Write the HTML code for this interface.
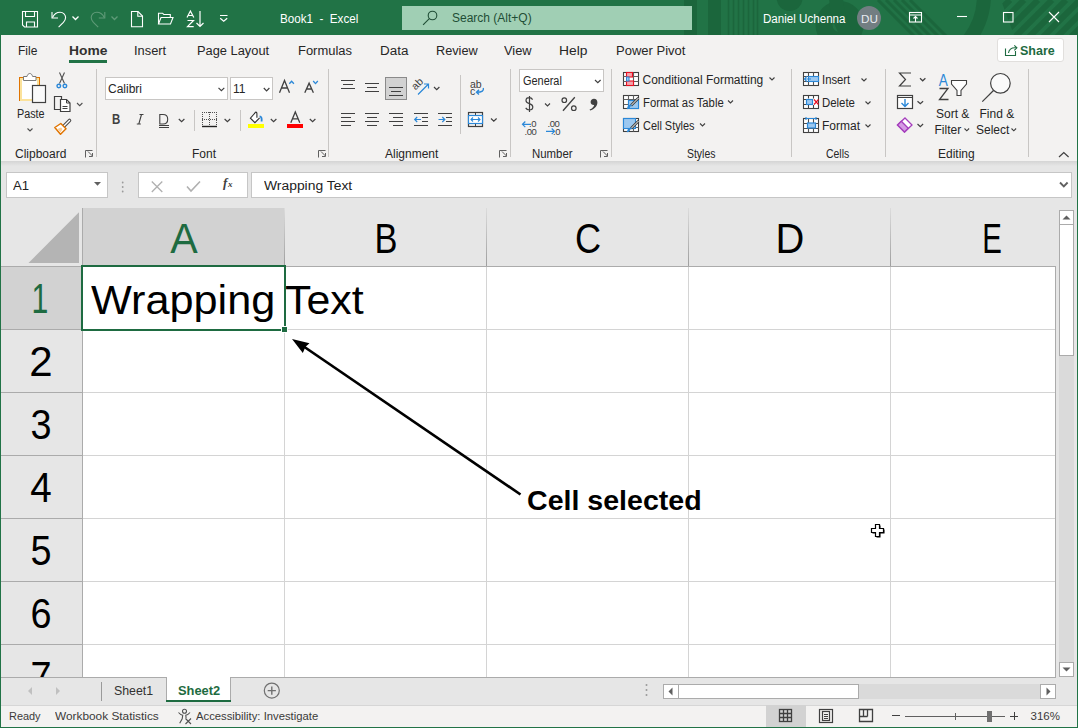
<!DOCTYPE html>
<html><head><meta charset="utf-8">
<style>
*{margin:0;padding:0;box-sizing:border-box}
html,body{width:1078px;height:728px;overflow:hidden}
body{position:relative;background:#e6e6e6;font-family:"Liberation Sans",sans-serif;color:#262626}
.a{position:absolute}
.t{position:absolute;line-height:1;white-space:nowrap;font-size:12px;transform-origin:0 0}
svg{position:absolute;overflow:visible}
.hl{position:absolute;height:1px;background:#d4d4d4}
.vl{position:absolute;width:1px;background:#d4d4d4}
.sep{position:absolute;width:1px;background:#c8c6c4}
</style></head><body>

<!-- TITLE BAR -->
<div class="a" style="left:0;top:0;width:1078px;height:35px;background:#217346;overflow:hidden">
  <svg width="1078" height="35" style="left:0;top:0">
    <g fill="none" stroke="#1b663c">
      <rect x="684" y="0" width="13" height="35" fill="#1b663c" stroke="none"/>
      <rect x="708" y="0" width="13" height="35" fill="#1b663c" stroke="none"/>
      <path d="M728.5 0v35M733.5 0v35M738.5 0v35M743.5 0v35M748.5 0v35M753.5 0v35M757.5 0v35" stroke-width="1.6"/>
      <circle cx="789.6" cy="-2" r="13" fill="#1b663c" stroke="none"/>
      <circle cx="839.5" cy="25" r="15.5" stroke-width="17"/>
      <path d="M878 0l40 40M886 0l40 40M894 0l40 40M902 0l40 40M910 0l40 40" stroke-width="3"/>
      <circle cx="910" cy="-5" r="74" stroke-width="14"/>
      <defs><clipPath id="rs"><polygon points="1001,0 1078,0 1078,35 1014,35"/></clipPath></defs><path clip-path="url(#rs)" d="M1010 0l-40 40M1024 0l-40 40M1038 0l-40 40M1052 0l-40 40M1066 0l-40 40M1080 0l-40 40M1094 0l-40 40M1108 0l-40 40" stroke-width="6"/>
    </g>
  </svg>
</div>
<div class="a" style="left:402px;top:6px;width:290px;height:24px;background:#a0cfb4"></div>
<div class="t" style="left:280px;top:13px;color:#fff;transform:scaleX(0.97)">Book1 &nbsp;- &nbsp;Excel</div>
<div class="t" style="left:452px;top:12px;color:#1f4e36">Search (Alt+Q)</div>
<div class="t" style="left:763px;top:13px;color:#fff;transform:scaleX(0.966)">Daniel Uchenna</div>
<div class="a" style="left:857px;top:6px;width:24px;height:24px;border-radius:50%;background:#727e82"></div>
<div class="t" style="left:861px;top:12.6px;color:#e8ecf0;font-size:11.7px">DU</div>

<!-- TITLE ICONS START -->
<svg width="1078" height="35" style="left:0;top:0">
<g fill="none" stroke="#fff" stroke-width="1.1">
<!-- save -->
<path d="M22.5 11.5h15v15.5h-13l-2-2z"/>
<path d="M25.5 11.5v5h9v-5M26.5 27v-5h8v5"/>
<!-- undo -->
<path d="M52 12v6h6" />
<path d="M52.5 17.5c1.8-3.5 4.5-5.2 7.5-5.2 3.3 0 5.6 2.4 5.6 5.3 0 1.8-.8 3.3-2.2 4.8l-4.8 4.8"/>
<path d="M72.5 16.5l3 3 3-3" stroke-width="1.3"/>
<!-- redo faded -->
<g stroke="#5f9a78">
<path d="M104.8 12v6h-6"/>
<path d="M104.3 17.5c-1.8-3.5-4.5-5.2-7.5-5.2-3.3 0-5.6 2.4-5.6 5.3 0 1.8.8 3.3 2.2 4.8l4.8 4.8"/>
<path d="M111.5 16.5l3 3 3-3" stroke-width="1.3"/>
</g>
<!-- new -->
<path d="M131.5 11.5h6.5l4.5 4.5v10.8h-11z"/>
<path d="M137.8 11.5v4.8h4.7"/>
<!-- open -->
<path d="M158.5 24v-10.8h4l1.3 1.3h6.5v2.5"/>
<path d="M158.5 24l2.5-6.5h12l-2.5 6.5z"/>
<!-- sort -->
<path d="M200 11v15.5M196.5 23l3.5 3.5 3.5-3.5" stroke-width="1.2"/>
<path d="M187.5 20.5h6l-6 6.2h6.2" stroke-width="1.2"/>
<path d="M187 17.6l3.4-6.6 3.4 6.6M188.2 15.5h4.4" stroke-width="1.2"/>
<!-- customize -->
<path d="M220 15.5h7.5M220.2 18.2l3.5 3 3.5-3" stroke-width="1.2"/>
<!-- search icon -->
<circle cx="432.5" cy="15.5" r="4.3" stroke="#1f4e36" stroke-width="1.1"/>
<path d="M429.3 18.7l-6.2 6.2" stroke="#1f4e36" stroke-width="1.1"/>
<!-- ribbon display options -->
<rect x="909.5" y="12.5" width="12" height="9.5"/>
<path d="M909.5 15h12M915.5 22v-5M913.5 18.5l2-2 2 2"/>
<!-- minimize -->
<path d="M957 16.5h10"/>
<!-- maximize -->
<rect x="1003.5" y="12.5" width="9.5" height="9.5"/>
<!-- close -->
<path d="M1049 12l10 10M1059 12l-10 10"/>
</g>
</svg>

<!-- TITLE ICONS END -->
<!-- TAB ROW + RIBBON -->
<div class="a" style="left:1px;top:35px;width:1076px;height:126px;background:#f3f2f1"></div>
<div class="t" style="left:18px;top:45px">File</div>
<div class="t" style="left:69px;top:45px;font-weight:bold;color:#323130;transform:scaleX(1.15)">Home</div>
<div class="a" style="left:69px;top:60px;width:38px;height:3px;background:#217346"></div>
<div class="t" style="left:134px;top:45px;transform:scaleX(1.07)">Insert</div>
<div class="t" style="left:197px;top:45px;transform:scaleX(1.07)">Page Layout</div>
<div class="t" style="left:298px;top:45px;transform:scaleX(1.08)">Formulas</div>
<div class="t" style="left:380px;top:45px;transform:scaleX(1.12)">Data</div>
<div class="t" style="left:436px;top:45px;transform:scaleX(1.06)">Review</div>
<div class="t" style="left:504px;top:45px;transform:scaleX(1.07)">View</div>
<div class="t" style="left:559px;top:45px;transform:scaleX(1.15)">Help</div>
<div class="t" style="left:616px;top:45px;transform:scaleX(1.085)">Power Pivot</div>
<div class="a" style="left:997px;top:38px;width:67px;height:24px;background:#fff;border:1px solid #e1dfdd;border-radius:3px"></div>
<div class="t" style="left:1020px;top:45px;font-weight:bold;color:#1e6b41;font-size:12.5px;transform:scaleX(1.0)">Share</div>
<svg width="20" height="20" style="left:1003px;top:42px"><g fill="none" stroke="#1e6b41" stroke-width="1.1"><path d="M2.5 6.5v7h10v-4.5"/><path d="M5.5 11c.5-3.5 2.8-5.2 6.5-5.2h1.5"/><path d="M11.3 3.3l2.6 2.5-2.6 2.5"/></g></svg>

<!-- ribbon shadow -->
<div class="a" style="left:1px;top:161px;width:1076px;height:5px;background:linear-gradient(#d4d4d4,#e6e6e6)"></div>

<!-- RIBBON ICONS START -->
<svg width="1078" height="728" style="left:0;top:0">
<g fill="none" stroke-linejoin="miter">
<!-- Paste -->
<rect x="19.5" y="77.5" width="20" height="23" fill="#fff" stroke="#e07400"/>
<rect x="21" y="79" width="17" height="21" fill="none" stroke="#fbe29b" stroke-width="2"/>
<path d="M23.5 76.5h3.5c.5-2 1.5-3 2.8-3s2.3 1 2.8 3h3.4v4h-12.5z" fill="#fff" stroke="#7a7a7a"/>
<rect x="32.5" y="85.5" width="13" height="17" fill="#fafafa" stroke="#404040" stroke-width="1.2"/>
<!-- paste chevron -->
<path d="M27.5 128.5l2.5 2.5 2.5-2.5" stroke="#505050" stroke-width="1.1"/>
<!-- Cut -->
<path d="M59.5 72.5l5 11M64.5 72.5l-5 11" stroke="#505050" stroke-width="1.1"/>
<circle cx="58.8" cy="86" r="1.8" stroke="#2b88d8" stroke-width="1.4"/>
<circle cx="64.9" cy="86" r="1.8" stroke="#2b88d8" stroke-width="1.4"/>
<!-- Copy -->
<path d="M60 109.5h-5.5v-13h7v3" stroke="#404040" stroke-width="1.2"/>
<path d="M60.5 99.5h6l3.5 3.5v8.5h-9.5z" fill="#fff" stroke="#404040" stroke-width="1.2"/>
<path d="M66.5 99.5v3.5h3.5M62.5 106.5h5M62.5 108.5h5" stroke="#404040" stroke-width="1"/>
<path d="M77 103l2.7 2.7 2.7-2.7" stroke="#505050" stroke-width="1.1"/>
<!-- Format painter -->
<path d="M63.5 126.5l6-6" stroke="#505050" stroke-width="3.6" stroke-linecap="round"/>
<path d="M63.5 126.5l6-6" stroke="#fff" stroke-width="1.4" stroke-linecap="round"/>
<path d="M54.8 127.5l6-4 5.2 5.2-5.5 5.5z" fill="#fff" stroke="#e07400" stroke-width="1.5" stroke-linejoin="round"/>
<path d="M57.5 129l3.5-1.5 1.5 1.5-2 3.5z" fill="#f9cf9b" stroke="none"/>
<!-- Font name box -->
<rect x="105.5" y="77.5" width="122" height="22" fill="#fff" stroke="#c8c6c4"/>
<path d="M218.5 87.8l2.9 2.9 2.9-2.9" stroke="#404040" stroke-width="1.2"/>
<rect x="230.5" y="77.5" width="42" height="22" fill="#fff" stroke="#c8c6c4"/>
<path d="M263.8 88l2.8 2.8 2.8-2.8" stroke="#404040" stroke-width="1.2"/>
<!-- grow/shrink -->
<path d="M279.5 92.8l5-12.3 5 12.3M281.5 88h6" stroke="#404040" stroke-width="1.3"/>
<path d="M289.3 83.8l2.3-2.6 2.3 2.6" stroke="#2b88d8" stroke-width="1.3"/>
<path d="M304.8 92.8l4.3-9.6 4.3 9.6M306.5 89h5.2" stroke="#404040" stroke-width="1.3"/>
<path d="M313.2 81l2.3 2.6 2.3-2.6" stroke="#2b88d8" stroke-width="1.3"/>
<!-- B I U -->

<path d="M139.5 114.5h4M136.8 124h4M141.5 114.5l-2.7 9.5" stroke="#404040" stroke-width="1.1"/>
<path d="M159.8 114.5h3.2c3 0 4.7 1.8 4.7 4.7s-1.7 4.8-4.7 4.8h-3.2z" stroke="#404040" stroke-width="1.1"/>
<path d="M159 125.5h10M159 127.5h10" stroke="#404040" stroke-width="1"/>
<path d="M178.8 119l2.8 2.6 2.8-2.6" stroke="#404040" stroke-width="1.2"/>
<line x1="194.5" y1="110" x2="194.5" y2="131" stroke="#c8c6c4"/>
<!-- borders -->
<g fill="#505050" stroke="none"><rect x="202" y="112" width="1" height="1"/><rect x="202" y="119" width="1" height="1"/><rect x="204" y="112" width="1" height="1"/><rect x="204" y="119" width="1" height="1"/><rect x="206" y="112" width="1" height="1"/><rect x="206" y="119" width="1" height="1"/><rect x="208" y="112" width="1" height="1"/><rect x="208" y="119" width="1" height="1"/><rect x="210" y="112" width="1" height="1"/><rect x="210" y="119" width="1" height="1"/><rect x="212" y="112" width="1" height="1"/><rect x="212" y="119" width="1" height="1"/><rect x="214" y="112" width="1" height="1"/><rect x="214" y="119" width="1" height="1"/><rect x="216" y="112" width="1" height="1"/><rect x="216" y="119" width="1" height="1"/><rect x="202" y="112" width="1" height="1"/><rect x="209" y="112" width="1" height="1"/><rect x="216" y="112" width="1" height="1"/><rect x="202" y="114" width="1" height="1"/><rect x="209" y="114" width="1" height="1"/><rect x="216" y="114" width="1" height="1"/><rect x="202" y="116" width="1" height="1"/><rect x="209" y="116" width="1" height="1"/><rect x="216" y="116" width="1" height="1"/><rect x="202" y="118" width="1" height="1"/><rect x="209" y="118" width="1" height="1"/><rect x="216" y="118" width="1" height="1"/><rect x="202" y="120" width="1" height="1"/><rect x="209" y="120" width="1" height="1"/><rect x="216" y="120" width="1" height="1"/><rect x="202" y="122" width="1" height="1"/><rect x="209" y="122" width="1" height="1"/><rect x="216" y="122" width="1" height="1"/><rect x="202" y="124" width="1" height="1"/><rect x="209" y="124" width="1" height="1"/><rect x="216" y="124" width="1" height="1"/></g>
<path d="M202 126.5h15" stroke="#202020" stroke-width="1.4"/>
<path d="M224.6 119l2.8 2.6 2.8-2.6" stroke="#404040" stroke-width="1.2"/>
<line x1="240.5" y1="110" x2="240.5" y2="131" stroke="#c8c6c4"/>
<!-- fill color -->
<path d="M256.9 117.8v-4.2c0-.9-.4-1.5-1-1.5s-1 .5-1.2 1.2l-4.3 4.9 4.5 4.5 4.7-4.9" fill="#fff" stroke="#303030" stroke-width="1.1"/>
<path d="M259.6 116.3c1.6.1 2.4 1.6 2 5.2" stroke="#2b88d8" stroke-width="1.8"/>
<rect x="248" y="124" width="16" height="4" fill="#ffff00" stroke="none"/>
<path d="M270.8 119l2.8 2.6 2.8-2.6" stroke="#404040" stroke-width="1.2"/>
<!-- font color -->
<path d="M290.8 122.7l4.5-10.7 4.5 10.7M292.5 118.8h5.6" stroke="#404040" stroke-width="1.3"/>
<rect x="287" y="124" width="16" height="4" fill="#ff0000" stroke="none"/>
<path d="M309.8 119l2.8 2.6 2.8-2.6" stroke="#404040" stroke-width="1.2"/>
<!-- launchers -->
<path d="M85.5 157.5v-7h7M88 151.5l4.5 4.5M92.5 153v3.5H89" stroke="#606060" stroke-width="1"/>
<path d="M318.5 157.5v-7h7M321 151.5l4.5 4.5M325.5 153v3.5H322" stroke="#606060" stroke-width="1"/>
<path d="M499.5 157.5v-7h7M502 151.5l4.5 4.5M506.5 153v3.5H503" stroke="#606060" stroke-width="1"/>
<path d="M600.5 157.5v-7h7M603 151.5l4.5 4.5M607.5 153v3.5H604" stroke="#606060" stroke-width="1"/>
<!-- collapse ribbon -->
<path d="M1059 157l4.8-4.5 4.8 4.5" stroke="#404040" stroke-width="1.2"/>
</g>
</svg>
<div class="t" style="left:16.5px;top:107.5px;transform:scaleX(0.9)">Paste</div>
<div class="t" style="left:112.3px;top:112.3px;font-size:14px;font-weight:bold;color:#404040;transform:scaleX(0.82)">B</div>
<div class="t" style="left:108px;top:82.8px;color:#262626">Calibri</div>
<div class="t" style="left:233px;top:82.8px;color:#262626">11</div>

<svg width="1078" height="728" style="left:0;top:0">
<g fill="none" stroke="#404040" stroke-width="1">
<!-- Alignment row1 -->
<path d="M341 80.5h14M343 84.5h10M341 88.5h14"/>
<path d="M365 83.5h14M367 87.5h10M365 91.5h14"/>
<rect x="385.5" y="77.5" width="21" height="22" fill="#d2d2d2" stroke="#8a8a8a"/>
<path d="M389 87.5h14M391 91.5h10M389 95.5h14"/>
<text x="0" y="0" transform="translate(415.5,90.5) rotate(-45)" font-family="Liberation Sans" font-size="10.5" fill="#404040" stroke="none">ab</text>
<path d="M418 94.5l10.5-10.5M424 84h4.5v4.5" stroke="#2b88d8" stroke-width="1.2"/>
<path d="M434 87l2.7 2.7 2.7-2.7" stroke-width="1.2"/>
<!-- row2 -->
<path d="M341 113.5h14M341 117.5h10M341 121.5h14M341 125.5h10"/>
<path d="M365 113.5h14M367 117.5h10M365 121.5h14M367 125.5h10"/>
<path d="M389 113.5h14M393 117.5h10M389 121.5h14M393 125.5h10"/>
<path d="M414 113.5h14M422 117.5h6M422 121.5h6M414 125.5h14"/>
<path d="M421 119.5h-6.5M417.2 117l-2.5 2.5 2.5 2.5" stroke="#2b88d8" stroke-width="1.2"/>
<path d="M438 113.5h14M446 117.5h6M446 121.5h6M438 125.5h14"/>
<path d="M438.5 119.5h6.5M442.3 117l2.5 2.5-2.5 2.5" stroke="#2b88d8" stroke-width="1.2"/>
<line x1="460.5" y1="75" x2="460.5" y2="134" stroke="#c8c6c4"/>
<!-- wrap text -->
<text x="470" y="87.7" font-family="Liberation Sans" font-size="10.5" fill="#404040" stroke="none">ab</text>
<text x="470" y="95" font-family="Liberation Sans" font-size="10.5" fill="#404040" stroke="none">c</text>
<path d="M483.3 88c.6 2.8-1 4.2-6.5 4.2M479 89.8l-2.5 2.4 2.5 2.4" stroke="#2b88d8" stroke-width="1.4"/>
<!-- merge -->
<rect x="468.5" y="112.5" width="14" height="14" stroke-width="1.2"/>
<path d="M475.5 112.5v2.5M475.5 124v2.5"/>
<rect x="468.5" y="115.5" width="14" height="8" fill="#fff" stroke="#2b88d8" stroke-width="1.2"/>
<path d="M471 119.5h9M473 117.5l-2 2 2 2M478 117.5l2 2-2 2" stroke="#2b88d8" stroke-width="1.1"/>
<path d="M491 118.5l2.8 2.6 2.8-2.6" stroke-width="1.2"/>
<!-- number format -->
<rect x="519.5" y="69.5" width="84" height="22" fill="#fff" stroke="#c8c6c4"/>
<path d="M595 80l2.8 2.6 2.8-2.6" stroke-width="1.2"/>
<path d="M545 103.5l2.5 2.5 2.5-2.5" stroke-width="1.1"/>
<!-- inc/dec decimal -->
<path d="M531 124.3h-8.5M525.3 121.5l-2.8 2.8 2.8 2.8" stroke="#2b88d8" stroke-width="1.2"/>
<path d="M546 131.3h8.5M551.7 128.5l2.8 2.8-2.8 2.8" stroke="#2b88d8" stroke-width="1.2"/>
<!-- Styles icons -->
<g stroke="#404040" stroke-width="1.1">
<rect x="623.5" y="72.5" width="15" height="13" fill="#fff"/>
<path d="M623.5 76.5h15M623.5 81.5h15M628.5 72.5v13M633.5 72.5v13" stroke="#606060"/>
<rect x="623.5" y="95.5" width="15" height="13" fill="#fff"/>
<path d="M623.5 99.5h15M623.5 104.5h15M628.5 95.5v13M633.5 95.5v13" stroke="#606060"/>
<rect x="623.5" y="118.5" width="15" height="13" fill="#fff"/>
<path d="M623.5 122.5h15M623.5 127.5h15M628.5 118.5v13M633.5 118.5v13" stroke="#606060"/>
</g>
<rect x="626.5" y="72.5" width="6" height="4.5" fill="#f4a3ac" stroke="#e81123" stroke-width="1.1"/>
<rect x="626.5" y="81" width="7" height="4.5" fill="#f4a3ac" stroke="#e81123" stroke-width="1.1"/>
<rect x="626.5" y="77" width="2.5" height="4" fill="#9cc8f0" stroke="#2b88d8" stroke-width="1"/>
<rect x="628.5" y="100.5" width="10" height="8" fill="#9cc8f0" stroke="#2b88d8" stroke-width="1.1"/>
<path d="M638.5 98l-7.5 7.5" stroke="#404040" stroke-width="2.6"/>
<path d="M638.5 98l-7.5 7.5" stroke="#fff" stroke-width="1"/>
<path d="M631.5 105l-1.5 1.5c-.5 1.5-1.5 2.2-3 2.2 1-.8 1-2 1.5-3z" fill="#2b88d8" stroke="#2b88d8" stroke-width="1"/>
<rect x="623.5" y="118.5" width="12" height="10" fill="#9cc8f0" stroke="#2b88d8" stroke-width="1.1"/>
<path d="M638.5 121l-7.5 7.5" stroke="#404040" stroke-width="2.6"/>
<path d="M638.5 121l-7.5 7.5" stroke="#fff" stroke-width="1"/>
<path d="M631.5 128l-1.5 1.5c-.5 1.5-1.5 2.2-3 2.2 1-.8 1-2 1.5-3z" fill="#2b88d8" stroke="#2b88d8" stroke-width="1"/>
<path d="M769.5 77.5l2.5 2.5 2.5-2.5M728 100.5l2.5 2.5 2.5-2.5M700 123.5l2.5 2.5 2.5-2.5" stroke-width="1.1"/>
<!-- Cells icons -->
<g stroke="#404040" stroke-width="1.1">
<rect x="803.5" y="72.5" width="15" height="13" fill="#fff"/>
<path d="M803.5 76.5h15M803.5 81.5h15M808.5 72.5v13M813.5 72.5v13" stroke="#505050"/>
<rect x="803.5" y="95.5" width="15" height="13" fill="#fff"/>
<path d="M803.5 95.5h15M803.5 108.5h15M803.5 99.5h3M803.5 104.5h3M808.5 95.5v3M813.5 95.5v3M808.5 105v3.5M813.5 105v3.5"/>
<rect x="803.5" y="118.5" width="15" height="14" fill="#fff"/>
<path d="M803.5 123.5h15M803.5 128.5h15M808.5 118.5v14M813.5 118.5v14" stroke="#505050"/>
</g>
<rect x="808.5" y="76.5" width="10" height="5" fill="#9cc8f0" stroke="#2b88d8" stroke-width="1.1"/>
<path d="M811 79h-6.5M807.2 76.2l-2.8 2.8 2.8 2.8" stroke="#2b88d8" stroke-width="1.1"/>
<rect x="806.5" y="99.5" width="6" height="5" fill="#9cc8f0" stroke="#2b88d8" stroke-width="1.2"/>
<path d="M814 99.5l4.5 5M818.5 99.5l-4.5 5" stroke="#e81123" stroke-width="1.2"/>
<rect x="807.5" y="123" width="8" height="5" fill="#9cc8f0" stroke="#2b88d8" stroke-width="1.2"/>
<path d="M806 118.5h10M806 117v3M816 117v3" stroke="#2b88d8" stroke-width="1.1"/>
<path d="M861.5 78.5l2.5 2.5 2.5-2.5M865.5 101.5l2.5 2.5 2.5-2.5M865.5 124.5l2.5 2.5 2.5-2.5" stroke-width="1.1"/>
<!-- Editing -->
<path d="M911 73h-11.5l6 6.5-6 6.5H911" stroke-width="1.2"/>
<path d="M920 78.2l2.7 2.6 2.7-2.6" stroke-width="1.2"/>
<rect x="897.5" y="95.5" width="15" height="13" fill="#fff" stroke-width="1.2"/>
<path d="M897.5 97.5h15"/>
<path d="M905 99v7.5M901.5 103l3.5 3.5 3.5-3.5" stroke="#2b88d8" stroke-width="1.4"/>
<path d="M917.5 101.2l2.8 2.6 2.8-2.6" stroke-width="1.2"/>
<path d="M905 118l7 7-7.5 7-7-7z" fill="#fff" stroke="#a53ebd" stroke-width="1.3"/>
<path d="M897.5 125l3.8-3.8 7 7-3.8 3.8z" fill="#d59be4" stroke="#a53ebd" stroke-width="1.3"/>
<path d="M917.5 124l2.8 2.6 2.8-2.6" stroke-width="1.2"/>
<!-- sort filter -->
<text x="938.6" y="85.8" font-family="Liberation Sans" font-size="16" fill="#2b88d8" stroke="none" transform="translate(939,0) scale(0.85,1) translate(-939,0)">A</text>
<path d="M939.5 88.5h8.5l-8.5 11h9" stroke-width="1.3"/>
<path d="M951.5 80.5h15v3.5l-5.5 6.5v5h-4v-5l-5.5-6.5z" fill="#fff" stroke-width="1.1"/>
<!-- find -->
<circle cx="1000.4" cy="83.3" r="9.8" fill="#fafafa" stroke-width="1.2"/>
<path d="M993.5 90.5l-11.2 11.2" stroke-width="1.2"/>
<path d="M964.5 128.5l2.3 2.3 2.3-2.3M1011.5 128.5l2.3 2.3 2.3-2.3" stroke-width="1.1"/>
</g>
</svg>
<div class="t" style="left:522.5px;top:74.8px;color:#262626;transform:scaleX(0.91)">General</div>
<svg width="1078" height="728" style="left:0;top:0"><g fill="none" stroke="#404040" stroke-width="1.2">
<path d="M532.6 99.6c-.7-1.3-1.9-2-3.3-2-1.9 0-3.3 1.1-3.3 2.8 0 1.7 1.2 2.5 3.4 3.2 2.3.7 3.4 1.6 3.4 3.4 0 1.9-1.5 3-3.5 3-1.6 0-2.9-.8-3.6-2.1M529.5 96v16"/>
<circle cx="564.3" cy="100.2" r="2.3"/><circle cx="573.8" cy="108.2" r="2.3"/><path d="M574.8 97.3l-11.8 13.5" stroke-width="1.3"/>
<path d="M594 98.7c2.2 0 3.4 1.6 3.4 3.8 0 3.5-2.8 6.8-7.3 7.9l-.5-.9c2.7-1 4.3-2.8 4.6-4.6-2 .2-3.6-1.1-3.6-3 0-1.9 1.4-3.2 3.4-3.2z" fill="#404040" stroke="none"/>
</g></svg>
<div class="t" style="left:529px;top:118.8px;font-size:9.5px;color:#404040;letter-spacing:-0.4px">.0</div>
<div class="t" style="left:524.5px;top:126.8px;font-size:9.5px;color:#404040;letter-spacing:-0.4px">.00</div>
<div class="t" style="left:547.5px;top:118.8px;font-size:9.5px;color:#404040;letter-spacing:-0.4px">.00</div>
<div class="t" style="left:553px;top:126.8px;font-size:9.5px;color:#404040;letter-spacing:-0.4px">.0</div>
<div class="t" style="left:642.5px;top:73.8px;transform:scaleX(1.0)">Conditional Formatting</div>
<div class="t" style="left:642.5px;top:96.8px;transform:scaleX(0.94)">Format as Table</div>
<div class="t" style="left:642.5px;top:119.8px;transform:scaleX(0.91)">Cell Styles</div>
<div class="t" style="left:822px;top:73.8px;transform:scaleX(0.94)">Insert</div>
<div class="t" style="left:822px;top:96.8px;transform:scaleX(0.95)">Delete</div>
<div class="t" style="left:822px;top:119.8px">Format</div>
<div class="t" style="left:936px;top:107.5px">Sort &amp;</div>
<div class="t" style="left:934.5px;top:123.8px">Filter</div>
<div class="t" style="left:979.5px;top:107.5px">Find &amp;</div>
<div class="t" style="left:976px;top:123.8px">Select</div>

<!-- RIBBON ICONS END -->
<!-- group labels -->
<div class="t" style="left:15px;top:148px">Clipboard</div>
<div class="t" style="left:192px;top:148px">Font</div>
<div class="t" style="left:385px;top:148px">Alignment</div>
<div class="t" style="left:532px;top:148px;transform:scaleX(0.95)">Number</div>
<div class="t" style="left:687px;top:148px;transform:scaleX(0.87)">Styles</div>
<div class="t" style="left:826px;top:148px;transform:scaleX(0.87)">Cells</div>
<div class="t" style="left:938px;top:148px">Editing</div>
<div class="sep" style="left:96px;top:69px;height:88px"></div>
<div class="sep" style="left:328px;top:69px;height:88px"></div>
<div class="sep" style="left:510px;top:69px;height:88px"></div>
<div class="sep" style="left:611px;top:69px;height:88px"></div>
<div class="sep" style="left:791px;top:69px;height:88px"></div>
<div class="sep" style="left:885px;top:69px;height:88px"></div>
<div class="sep" style="left:1028px;top:69px;height:88px"></div>

<!-- FORMULA BAR -->
<div class="a" style="left:6px;top:172px;width:102px;height:26px;background:#fff;border:1px solid #c6c6c6"></div>
<div class="t" style="left:13px;top:179.5px;font-size:12.5px;color:#222;transform:scaleX(1.05)">A1</div>
<div class="a" style="left:138px;top:172px;width:110px;height:26px;background:#fff;border:1px solid #c6c6c6"></div>
<div class="a" style="left:251px;top:172px;width:821px;height:26px;background:#fff;border:1px solid #c6c6c6"></div>
<div class="t" style="left:263.5px;top:180.3px;font-size:12.5px;color:#222;transform:scaleX(1.11)">Wrapping Text</div>

<!-- FBAR ICONS START -->
<svg width="1078" height="40" style="left:0;top:165px">
<g fill="none">
<polygon points="94,17 101,17 97.5,20.8" fill="#606060"/>
<circle cx="122.7" cy="17.5" r="0.9" fill="#9a9a9a"/>
<circle cx="122.7" cy="22" r="0.9" fill="#9a9a9a"/>
<circle cx="122.7" cy="26.5" r="0.9" fill="#9a9a9a"/>
<path d="M151.8 16.5l10.5 10.5M162.3 16.5l-10.5 10.5" stroke="#b0b0b0" stroke-width="1.3"/>
<path d="M187 21.5l4 4.5 9-9.5" stroke="#b0b0b0" stroke-width="1.6"/>
<path d="M1060 17.5l3.8 3.8 3.8-3.8" stroke="#606060" stroke-width="1.9"/>
</g>
</svg>
<div class="t" style="left:223px;top:176px;font-family:'Liberation Serif',serif;font-style:italic;font-weight:bold;font-size:13px;color:#404040">f</div>
<div class="t" style="left:228px;top:180px;font-family:'Liberation Serif',serif;font-style:italic;font-weight:bold;font-size:9px;color:#404040">x</div>

<!-- FBAR ICONS END -->
<!-- GRID -->
<div class="a" style="left:82px;top:266px;width:974px;height:411px;background:#fff"></div>
<div class="a" style="left:83px;top:208px;width:201px;height:58px;background:#d2d2d2"></div>
<div class="a" style="left:82px;top:208px;width:1px;height:58px;background:#ababab"></div>
<div class="a" style="left:284px;top:208px;width:1px;height:58px;background:linear-gradient(#dcdcdc,#9e9e9e)"></div>
<div class="a" style="left:486px;top:208px;width:1px;height:58px;background:linear-gradient(#dcdcdc,#9e9e9e)"></div>
<div class="a" style="left:688px;top:208px;width:1px;height:58px;background:linear-gradient(#dcdcdc,#9e9e9e)"></div>
<div class="a" style="left:890px;top:208px;width:1px;height:58px;background:linear-gradient(#dcdcdc,#9e9e9e)"></div>
<div class="a" style="left:0;top:266px;width:1056px;height:1px;background:#ababab"></div>
<svg width="90" height="60" style="left:0;top:208px"><polygon points="28.5,55 79,4.3 79,55" fill="#b4b4b4"/></svg>
<div class="a" style="left:1px;top:267px;width:81px;height:62px;background:#d2d2d2"></div>
<div class="a" style="left:82px;top:266px;width:1px;height:411px;background:#ababab"></div>
<div class="a" style="left:1px;top:329px;width:81px;height:1px;background:#ababab"></div>
<div class="hl" style="left:83px;top:329px;width:973px"></div>
<div class="a" style="left:1px;top:392px;width:81px;height:1px;background:#ababab"></div>
<div class="hl" style="left:83px;top:392px;width:973px"></div>
<div class="a" style="left:1px;top:455px;width:81px;height:1px;background:#ababab"></div>
<div class="hl" style="left:83px;top:455px;width:973px"></div>
<div class="a" style="left:1px;top:518px;width:81px;height:1px;background:#ababab"></div>
<div class="hl" style="left:83px;top:518px;width:973px"></div>
<div class="a" style="left:1px;top:581px;width:81px;height:1px;background:#ababab"></div>
<div class="hl" style="left:83px;top:581px;width:973px"></div>
<div class="a" style="left:1px;top:644px;width:81px;height:1px;background:#ababab"></div>
<div class="hl" style="left:83px;top:644px;width:973px"></div>
<div class="vl" style="left:284px;top:267px;height:410px"></div>
<div class="vl" style="left:486px;top:267px;height:410px"></div>
<div class="vl" style="left:688px;top:267px;height:410px"></div>
<div class="vl" style="left:890px;top:267px;height:410px"></div>
<div class="a" style="left:1055px;top:266px;width:1px;height:411px;background:#ababab"></div>
<div class="a" style="left:1px;top:677px;width:1055px;height:1px;background:#ababab"></div>
<div class="t" style="left:133.5px;width:100px;text-align:center;top:218.4px;font-size:42px;color:#1e6b41;transform:scaleX(0.98);transform-origin:50% 0">A</div>
<div class="t" style="left:335.5px;width:100px;text-align:center;top:218.4px;font-size:42px;color:#000;transform:scaleX(0.82);transform-origin:50% 0">B</div>
<div class="t" style="left:537.5px;width:100px;text-align:center;top:218.4px;font-size:42px;color:#000;transform:scaleX(0.86);transform-origin:50% 0">C</div>
<div class="t" style="left:739.5px;width:100px;text-align:center;top:218.4px;font-size:42px;color:#000;transform:scaleX(0.95);transform-origin:50% 0">D</div>
<div class="t" style="left:941.5px;width:100px;text-align:center;top:218.4px;font-size:42px;color:#000;transform:scaleX(0.7);transform-origin:50% 0">E</div>
<div class="t" style="left:-10px;width:100px;text-align:center;top:278.4px;font-size:42px;color:#1e6b41;transform:scaleX(0.72);transform-origin:50% 0">1</div>
<div class="t" style="left:-9px;width:100px;text-align:center;top:341.4px;font-size:42px;color:#000;transform:scaleX(1.0);transform-origin:50% 0">2</div>
<div class="t" style="left:-9px;width:100px;text-align:center;top:404.4px;font-size:42px;color:#000;transform:scaleX(0.9);transform-origin:50% 0">3</div>
<div class="t" style="left:-9px;width:100px;text-align:center;top:467.4px;font-size:42px;color:#000;transform:scaleX(0.92);transform-origin:50% 0">4</div>
<div class="t" style="left:-9px;width:100px;text-align:center;top:530.4px;font-size:42px;color:#000;transform:scaleX(0.9);transform-origin:50% 0">5</div>
<div class="t" style="left:-9px;width:100px;text-align:center;top:593.4px;font-size:42px;color:#000;transform:scaleX(0.9);transform-origin:50% 0">6</div>
<div class="t" style="left:-9px;width:100px;text-align:center;top:656.4px;font-size:42px;color:#000;transform:scaleX(0.9);transform-origin:50% 0">7</div>
<div class="t" style="left:90.5px;top:280.1px;font-size:40px;color:#000;transform:scaleX(1.081)">Wrapping</div>
<div class="t" style="left:285px;top:280.1px;font-size:40px;color:#000;transform:scaleX(1.071)">Text</div>
<div class="a" style="left:81px;top:265px;width:205px;height:66px;border:2px solid #1e6b41"></div>
<div class="a" style="left:281px;top:326px;width:7px;height:7px;background:#fff"></div>
<div class="a" style="left:282px;top:327px;width:5px;height:5px;background:#1e6b41"></div>
<div class="a" style="left:1059px;top:210px;width:15px;height:466px;background:#dadada"></div>
<div class="a" style="left:1059px;top:210px;width:15px;height:15px;background:#fff;border:1px solid #ababab"></div>
<svg width="15" height="15" style="left:1059px;top:210px"><polygon points="3.5,9.5 7.5,5.5 11.5,9.5" fill="#5f5f5f"/></svg>
<div class="a" style="left:1059px;top:224px;width:15px;height:132px;background:#fff;border:1px solid #ababab"></div>
<div class="a" style="left:1059px;top:662px;width:15px;height:15px;background:#fff;border:1px solid #ababab"></div>
<svg width="15" height="15" style="left:1059px;top:662px"><polygon points="3.5,5.5 7.5,9.5 11.5,5.5" fill="#5f5f5f"/></svg>

<!-- SHEET TABS -->
<div class="a" style="left:1px;top:678px;width:1076px;height:27px;background:#e6e6e6"></div>
<div class="a" style="left:1px;top:677px;width:1055px;height:1px;background:#ababab"></div>
<svg width="20" height="20" style="left:22px;top:681px"><polygon points="10,6 6,10 10,14" fill="#c0c0c0"/></svg>
<svg width="20" height="20" style="left:49px;top:681px"><polygon points="7,6 11,10 7,14" fill="#c0c0c0"/></svg>
<div class="a" style="left:101px;top:682px;width:1px;height:19px;background:#9a9a9a"></div>
<div class="t" style="left:114px;top:685px;color:#323130;transform:scaleX(1.03)">Sheet1</div>
<div class="a" style="left:166px;top:677px;width:65px;height:25px;background:#fff;border-left:1px solid #ababab;border-right:1px solid #ababab"></div>
<div class="a" style="left:166px;top:700px;width:65px;height:2px;background:#1e6b41"></div>
<div class="t" style="left:178px;top:685px;font-weight:bold;color:#1e6b41;transform:scaleX(1.07)">Sheet2</div>
<svg width="20" height="20" style="left:262px;top:681px"><circle cx="9.8" cy="9.6" r="7.5" fill="none" stroke="#707070" stroke-width="1.2"/><path d="M9.8 5.5v8.2M5.7 9.6h8.2" stroke="#707070" stroke-width="1.4"/></svg>
<svg width="6" height="20" style="left:644px;top:681px"><circle cx="2.5" cy="4" r="1" fill="#9a9a9a"/><circle cx="2.5" cy="9" r="1" fill="#9a9a9a"/><circle cx="2.5" cy="14" r="1" fill="#9a9a9a"/></svg>
<div class="a" style="left:663px;top:684px;width:393px;height:15px;background:#dadada"></div>
<div class="a" style="left:663px;top:684px;width:16px;height:15px;background:#fff;border:1px solid #ababab"></div>
<svg width="16" height="15" style="left:663px;top:684px"><polygon points="9.5,3.5 5.5,7.5 9.5,11.5" fill="#5f5f5f"/></svg>
<div class="a" style="left:678px;top:684px;width:181px;height:15px;background:#fff;border:1px solid #ababab"></div>
<div class="a" style="left:1040px;top:684px;width:16px;height:15px;background:#fff;border:1px solid #ababab"></div>
<svg width="16" height="15" style="left:1040px;top:684px"><polygon points="6.5,3.5 10.5,7.5 6.5,11.5" fill="#5f5f5f"/></svg>
<svg width="1078" height="728" style="left:0;top:0"><line x1="520.5" y1="494.5" x2="303" y2="346" stroke="#000" stroke-width="2.7"/><polygon points="292,338.9 309.5,343.3 305.5,346.8 302.8,353.1" fill="#000"/></svg>
<div class="t" style="left:527px;top:487.3px;font-size:28px;font-weight:bold;color:#000;transform:scaleX(1.02)">Cell selected</div>
<svg width="20" height="20" style="left:867px;top:521px"><path d="M8.5 3.5h4v4h4v4h-4v4h-4v-4h-4v-4h4z" fill="#000" transform="translate(1,1)"/><path d="M8.5 3.5h4v4h4v4h-4v4h-4v-4h-4v-4h4z" fill="#fff" stroke="#000" stroke-width="1.2"/></svg>
<!-- STATUS BAR -->
<div class="a" style="left:1px;top:705px;width:1076px;height:22px;background:#f3f2f1;border-top:1px solid #d6d6d6"></div>
<div class="t" style="left:9px;top:711.3px;font-size:11.5px;color:#3b3a39;transform:scaleX(0.95)">Ready</div>
<div class="t" style="left:55px;top:711.3px;font-size:11.5px;color:#3b3a39;transform:scaleX(1.03)">Workbook Statistics</div>
<svg width="18" height="18" style="left:177px;top:708px"><g fill="none" stroke="#505050" stroke-width="1.1"><circle cx="7.5" cy="3.2" r="2"/><path d="M1.5 4.5c1.5 1.8 3 2.6 4.2 2.8l-.5 3.5-2.5 4.5M13 4.5c-1.5 1.8-3 2.6-4.2 2.8l.3 3"/><path d="M8.5 10.5l5.5 5.5M14 10.5l-5.5 5.5"/></g></svg>
<div class="t" style="left:196px;top:711.3px;font-size:11.5px;color:#3b3a39;transform:scaleX(0.98)">Accessibility: Investigate</div>
<div class="a" style="left:766px;top:705px;width:40px;height:22px;background:#d2d2d2"></div>
<svg width="16" height="16" style="left:778px;top:708px"><g fill="none" stroke="#404040" stroke-width="1.3"><rect x="1.5" y="1.5" width="12" height="12"/><path d="M5.5 1.5v12M9.5 1.5v12M1.5 5.5h12M1.5 9.5h12"/></g></svg>
<svg width="16" height="16" style="left:818px;top:708px"><g fill="none" stroke="#404040" stroke-width="1.2"><rect x="1.5" y="1.5" width="13" height="13"/><rect x="4.5" y="3.5" width="7" height="9"/><path d="M6 6.5h4M6 8.5h4M6 10.5h4"/></g></svg>
<svg width="16" height="16" style="left:858px;top:708px"><g fill="none" stroke="#404040" stroke-width="1.3"><path d="M1.5 1.5h13v12h-13z"/><path d="M5.5 1.5v7M9.5 1.5v7M1.5 8.5h8"/></g></svg>
<div class="a" style="left:892px;top:715px;width:8px;height:1px;background:#404040"></div>
<div class="a" style="left:905px;top:716px;width:100px;height:1px;background:#606060"></div>
<div class="a" style="left:955px;top:713px;width:1px;height:7px;background:#606060"></div>
<div class="a" style="left:987px;top:711px;width:5px;height:11px;background:#707070"></div>
<div class="a" style="left:1010px;top:715.5px;width:8px;height:1px;background:#404040"></div>
<div class="a" style="left:1013.5px;top:712px;width:1px;height:8px;background:#404040"></div>
<div class="t" style="left:1030.5px;top:711.3px;font-size:11.5px;color:#3b3a39;transform:scaleX(1.0)">316%</div>
<!-- window border -->
<div class="a" style="left:0;top:35px;width:1px;height:693px;background:#217346"></div>
<div class="a" style="left:1077px;top:35px;width:1px;height:693px;background:#217346"></div>
<div class="a" style="left:0;top:727px;width:1078px;height:1px;background:#217346"></div>
</body></html>
